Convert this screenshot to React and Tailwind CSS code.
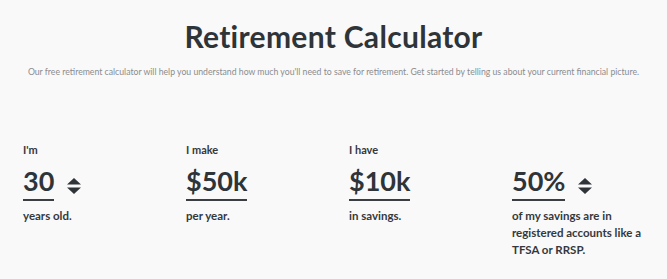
import React from "react";

function Arrows() {
  return (
    <svg width="14" height="16" viewBox="0 0 14 16" className="ml-[13px] mt-[1px]">
      <path d="M7 0 L14 6.5 L0 6.5 Z" fill="#2f3439" />
      <path d="M0 9.5 L14 9.5 L7 16 Z" fill="#2f3439" />
    </svg>
  );
}

function Field({ label, value, after, arrows }) {
  return (
    <div className="w-[163px] shrink-0">
      <p className="h-[12px] text-[11px] font-bold leading-[12px] text-[#34383d]">{label}</p>
      <div className="mt-[14px] flex items-center">
        <div className="border-b-2 border-[#3a3e43] pb-[7px]">
          <span className="block text-[27px] font-bold leading-[22px] text-[#2f3439]">{value}</span>
        </div>
        {arrows && <Arrows />}
      </div>
      <p className="mt-[6px] whitespace-nowrap text-[11.5px] font-bold leading-[17px] text-[#34383d]">{after}</p>
    </div>
  );
}

export default function App() {
  const fields = [
    { label: "I'm", value: "30", after: "years old.", arrows: true },
    { label: "I make", value: "$50k", after: "per year." },
    { label: "I have", value: "$10k", after: "in savings." },
    {
      label: "",
      value: "50%",
      after: (
        <>
          of my savings are in
          <br />
          registered accounts like a
          <br />
          TFSA or RRSP.
        </>
      ),
      arrows: true,
    },
  ];
  return (
    <div className="h-[279px] w-full overflow-hidden bg-[#f9f9f9] font-['Lato',sans-serif]">
      <h1 className="pt-[20px] text-center text-[30px] font-bold leading-[32px] tracking-[0.3px] text-[#2f3439]">
        Retirement Calculator
      </h1>
      <p className="mt-[14px] text-center text-[8.7px] leading-[12px] text-[#8a8c8f]">
        Our free retirement calculator will help you understand how much you'll need to save for retirement. Get started by telling us about your current financial picture.
      </p>
      <div className="mt-[66px] flex pl-[23px]">
        {fields.map((f, i) => (
          <Field key={i} {...f} />
        ))}
      </div>
    </div>
  );
}
